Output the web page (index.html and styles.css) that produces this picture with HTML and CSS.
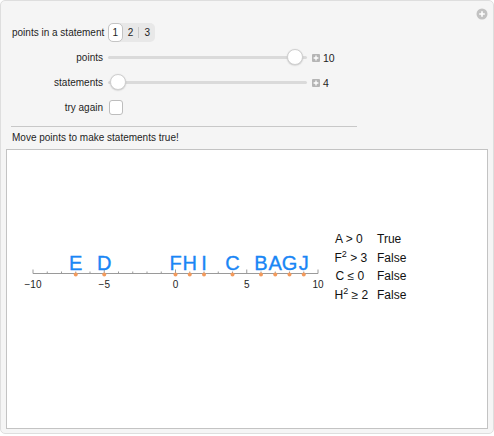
FILE: index.html
```html
<!DOCTYPE html>
<html>
<head>
<meta charset="utf-8">
<link rel="stylesheet" href="styles.css">
</head>
<body>
<div class="panel">
  <svg class="corner-plus" width="12" height="12" viewBox="0 0 12 12"><circle cx="6" cy="6" r="5.5" fill="#c2c2c2"/><path d="M6 3.2v5.6M3.2 6h5.6" stroke="#fff" stroke-width="1.6"/></svg>
  <div class="controls">
    <div class="label">points in a statement</div>
    <div class="cell">
      <div class="setter"><span class="seg active">1</span><span class="seg">2</span><span class="divider"></span><span class="seg">3</span></div>
    </div>
    <div class="label">points</div>
    <div class="cell">
      <div class="track"><div class="thumb" style="left:179px"></div></div>
      <svg class="plus" width="8" height="8" viewBox="0 0 8 8"><rect width="8" height="8" rx="1" fill="#b5b5b5"/><path d="M4 1.6v4.8M1.6 4h4.8" stroke="#fff" stroke-width="1.3"/></svg>
      <span class="val">10</span>
    </div>
    <div class="label">statements</div>
    <div class="cell">
      <div class="track"><div class="thumb" style="left:2px"></div></div>
      <svg class="plus" width="8" height="8" viewBox="0 0 8 8"><rect width="8" height="8" rx="1" fill="#b5b5b5"/><path d="M4 1.6v4.8M1.6 4h4.8" stroke="#fff" stroke-width="1.3"/></svg>
      <span class="val">4</span>
    </div>
    <div class="label">try again</div>
    <div class="cell"><div class="checkbox"></div></div>
  </div>
  <div class="rule"></div>
  <div class="msg">Move points to make statements true!</div>
  <div class="graph">
    <svg width="480" height="278" viewBox="7 150 480 278">
      <g stroke="#9a9a9a" stroke-width="1">
        <line x1="33" y1="273.5" x2="318" y2="273.5"/>
        <path d="M33 273.5v-4M104.25 273.5v-4M175.5 273.5v-4M246.75 273.5v-4M318 273.5v-4"/>
        <path d="M47.25 273.5v-2M61.5 273.5v-2M75.75 273.5v-2M90 273.5v-2M118.5 273.5v-2M132.75 273.5v-2M147 273.5v-2M161.25 273.5v-2M189.75 273.5v-2M204 273.5v-2M218.25 273.5v-2M232.5 273.5v-2M261 273.5v-2M275.25 273.5v-2M289.5 273.5v-2M303.75 273.5v-2"/>
      </g>
      <g class="ticklbl" text-anchor="middle">
        <text x="33" y="288">−10</text>
        <text x="104.25" y="288">−5</text>
        <text x="175.5" y="288">0</text>
        <text x="246.75" y="288">5</text>
        <text x="318" y="288">10</text>
      </g>
      <g fill="#f39a5c">
        <circle cx="75.75" cy="274.5" r="2"/>
        <circle cx="104.25" cy="274.5" r="2"/>
        <circle cx="175.5" cy="274.5" r="2"/>
        <circle cx="189.75" cy="274.5" r="2"/>
        <circle cx="204" cy="274.5" r="2"/>
        <circle cx="232.5" cy="274.5" r="2"/>
        <circle cx="261" cy="274.5" r="2"/>
        <circle cx="275.25" cy="274.5" r="2"/>
        <circle cx="289.5" cy="274.5" r="2"/>
        <circle cx="303.75" cy="274.5" r="2"/>
      </g>
      <g class="pt" text-anchor="middle">
        <text x="75.75" y="269.5">E</text>
        <text x="104.25" y="269.5">D</text>
        <text x="175.5" y="269.5">F</text>
        <text x="189.75" y="269.5">H</text>
        <text x="204" y="269.5">I</text>
        <text x="232.5" y="269.5">C</text>
        <text x="261" y="269.5">B</text>
        <text x="275.25" y="269.5">A</text>
        <text x="289.5" y="269.5">G</text>
        <text x="303.75" y="269.5">J</text>
      </g>
      <g class="stmt">
        <text x="335" y="243">A &gt; 0</text>
        <text x="377" y="243">True</text>
        <text x="334.5" y="262">F<tspan class="sup" dy="-5">2</tspan><tspan dy="5"> &gt; 3</tspan></text>
        <text x="377" y="262">False</text>
        <text x="335.5" y="280">C ≤ 0</text>
        <text x="377" y="280">False</text>
        <text x="334.5" y="299">H<tspan class="sup" dy="-5">2</tspan><tspan dy="5"> ≥ 2</tspan></text>
        <text x="377" y="299">False</text>
      </g>
    </svg>
  </div>
</div>
</body>
</html>
```

FILE: styles.css
```css
html, body {
  margin: 0;
  padding: 0;
  background: #ffffff;
}

body {
  font-family: "Liberation Sans", Arial, sans-serif;
  color: #1e1e1e;
}

.panel {
  position: relative;
  box-sizing: border-box;
  width: 494px;
  height: 434px;
  border: 1px solid #dedede;
  border-radius: 5px;
  background: #f5f5f5;
  padding: 0 5px;
}

.corner-plus {
  position: absolute;
  top: 7px;
  right: 5px;
}

.controls {
  display: grid;
  grid-template-columns: 91px auto;
  grid-auto-rows: 25px;
  column-gap: 5px;
  margin-left: 6px;
  padding-top: 19px;
  font-size: 10px;
}

.label {
  text-align: right;
  align-self: center;
  white-space: nowrap;
  line-height: 12px;
}

.cell {
  display: flex;
  align-items: center;
}

.setter {
  display: flex;
  align-items: center;
  height: 19px;
  width: 47px;
  border-radius: 5px;
  background: #e8e8e8;
  box-sizing: border-box;
}

.seg {
  width: 16px;
  text-align: center;
  line-height: 17px;
}

.seg.active {
  box-sizing: border-box;
  width: 15px;
  height: 19px;
  line-height: 17px;
  background: #ffffff;
  border: 1px solid #c4c4c4;
  border-radius: 5px;
}

.divider {
  width: 1px;
  height: 11px;
  background: #c9c9c9;
}

.track {
  position: relative;
  width: 199px;
  height: 3px;
  border-radius: 2px;
  background: #dadada;
}

.thumb {
  position: absolute;
  top: -7px;
  width: 16px;
  height: 16px;
  box-sizing: border-box;
  border-radius: 50%;
  background: #ffffff;
  border: 1px solid #d0d0d0;
  box-shadow: 0 0.5px 1.5px rgba(0, 0, 0, 0.2);
}

.plus {
  margin-left: 5px;
}

.val {
  margin-left: 3px;
  font-size: 10.5px;
}

.checkbox {
  margin-left: 1px;
  width: 14px;
  height: 15px;
  box-sizing: border-box;
  background: #ffffff;
  border: 1px solid #bdbdbd;
  border-radius: 3px;
}

.rule {
  margin: 6px 0 0 5px;
  width: 346px;
  height: 1px;
  background: #c8c8c8;
}

.msg {
  margin: 4px 0 0 6px;
  font-size: 10px;
  line-height: 14px;
}

.graph {
  margin-top: 4px;
  box-sizing: border-box;
  width: 482px;
  height: 280px;
  border: 1px solid #c3c3c3;
  background: #ffffff;
}

.graph svg {
  display: block;
}

.ticklbl text {
  font-family: "Liberation Sans", Arial, sans-serif;
  font-size: 10px;
  fill: #1e1e1e;
}

.pt text {
  font-family: "Liberation Sans", Arial, sans-serif;
  font-size: 20px;
  fill: #1a86f5;
  stroke: #1a86f5;
  stroke-width: 0.35px;
}

.stmt text {
  font-family: "Liberation Sans", Arial, sans-serif;
  font-size: 12px;
  fill: #111111;
}

.stmt .sup {
  font-size: 9px;
}
```
